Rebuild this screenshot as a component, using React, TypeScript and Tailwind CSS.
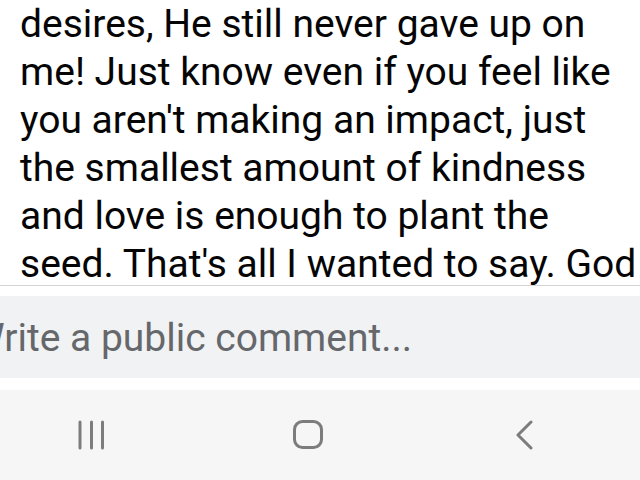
import React from "react";

const COMMENT_LINES = [
  "desires, He still never gave up on",
  "me! Just know even if you feel like",
  "you aren't making an impact, just",
  "the smallest amount of kindness",
  "and love is enough to plant the",
  "seed. That's all I wanted to say. God",
];

const NavBar = () => {
  return (
    <div className="flex h-[90px] items-center bg-[#f6f6f6] pl-[77px]">
      <svg width="28" height="30" viewBox="0 0 28 30" className="text-[#7c7c7c]">
        <line x1="3" y1="2" x2="3" y2="28" stroke="currentColor" strokeWidth="3" strokeLinecap="round" />
        <line x1="14.5" y1="2" x2="14.5" y2="28" stroke="currentColor" strokeWidth="3" strokeLinecap="round" />
        <line x1="25.5" y1="2" x2="25.5" y2="28" stroke="currentColor" strokeWidth="3" strokeLinecap="round" />
      </svg>
      <svg width="32" height="32" viewBox="0 0 32 32" className="ml-[187px] text-[#7c7c7c]">
        <rect x="2.5" y="2.5" width="27" height="26" rx="8" fill="none" stroke="currentColor" strokeWidth="3" />
      </svg>
      <svg width="20" height="30" viewBox="0 0 20 30" className="ml-[191px] text-[#7c7c7c]">
        <polyline points="16,2 3,15 16,28" fill="none" stroke="currentColor" strokeWidth="3" strokeLinecap="round" strokeLinejoin="round" />
      </svg>
    </div>
  );
}

export default function App() {
  return (
    <div className="h-[480px] w-[640px] overflow-hidden bg-white font-['Roboto',sans-serif]">
      <div className="h-[285px] overflow-hidden pl-[20px] text-[39px] leading-[48px] text-[#050505]">
        {COMMENT_LINES.map((line) => {
          return (
            <p key={line} className="whitespace-nowrap">
              {line}
            </p>
          );
        })}
      </div>
      <hr className="h-px border-0 bg-[#d3d4d6]" />
      <div className="mt-[10px] flex h-[82px] items-center overflow-hidden bg-[#f1f2f4]">
        <p className="ml-[-30px] mt-[2px] whitespace-nowrap text-[39px] leading-[48px] text-[#65676b]">
          Write a public comment...
        </p>
      </div>
      <div className="h-[12px]" />
      <NavBar />
    </div>
  );
}
